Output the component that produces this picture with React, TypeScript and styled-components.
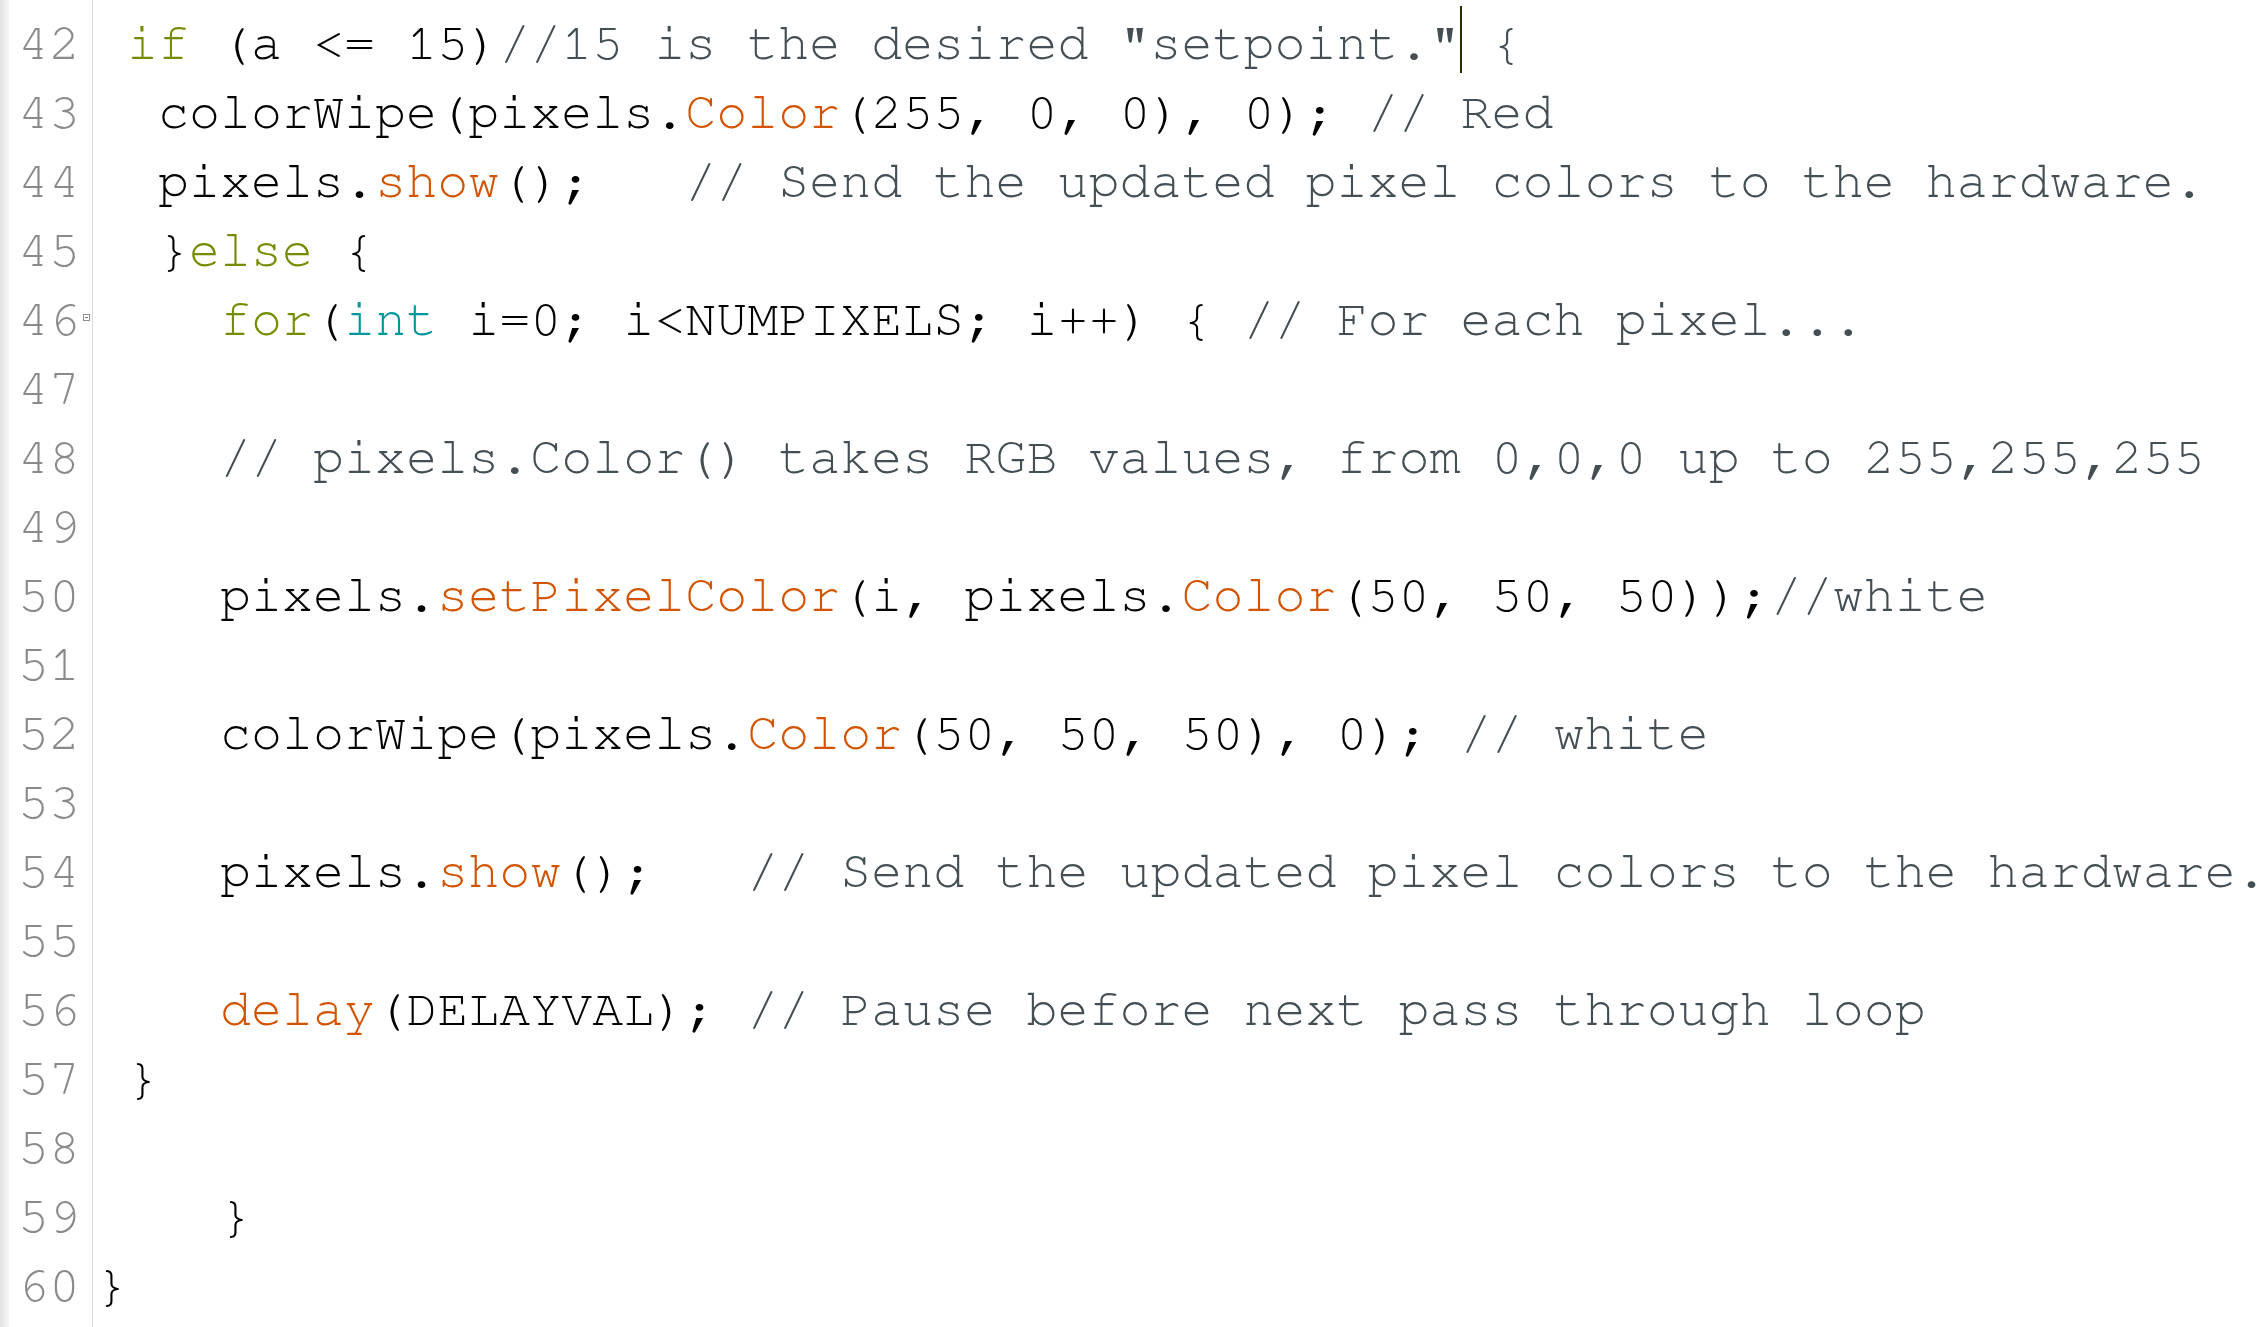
import React from "react";
import styled, { createGlobalStyle } from "styled-components";

const GlobalStyle = createGlobalStyle`
  html, body { margin: 0; padding: 0; background: #ffffff; }
  #root { height: 100vh; }
`;

const FONT = `"Nimbus Mono PS", "Nimbus Mono L", "FreeMono", "Liberation Mono", "Courier New", monospace`;
const SIZE = 51.7;
const LINE = 69;

type Kind = "p" | "k" | "t" | "f" | "c" | "caret";
type Tok = [string, Kind];

const colors: Record<Kind, string> = {
  p: "#000000",
  k: "#728e00",
  t: "#00979c",
  f: "#d35400",
  c: "#434f54",
  caret: "#000",
};

const lines: { n: number; fold?: boolean; toks: Tok[] }[] = [
  {
    n: 42,
    toks: [
      [" ", "p"],
      ["if", "k"],
      [" (a <= 15)", "p"],
      ['//15 is the desired "setpoint."', "c"],
      ["", "caret"],
      [" {", "c"],
    ],
  },
  {
    n: 43,
    toks: [
      ["  colorWipe(pixels.", "p"],
      ["Color", "f"],
      ["(255, 0, 0), 0); ", "p"],
      ["// Red", "c"],
    ],
  },
  {
    n: 44,
    toks: [
      ["  pixels.", "p"],
      ["show", "f"],
      ["();   ", "p"],
      ["// Send the updated pixel colors to the hardware.", "c"],
    ],
  },
  { n: 45, toks: [["  }", "p"], ["else", "k"], [" {", "p"]] },
  {
    n: 46,
    fold: true,
    toks: [
      ["    ", "p"],
      ["for", "k"],
      ["(", "p"],
      ["int", "t"],
      [" i=0; i<NUMPIXELS; i++) { ", "p"],
      ["// For each pixel...", "c"],
    ],
  },
  { n: 47, toks: [] },
  {
    n: 48,
    toks: [
      ["    ", "p"],
      ["// pixels.Color() takes RGB values, from 0,0,0 up to 255,255,255", "c"],
    ],
  },
  { n: 49, toks: [] },
  {
    n: 50,
    toks: [
      ["    pixels.", "p"],
      ["setPixelColor", "f"],
      ["(i, pixels.", "p"],
      ["Color", "f"],
      ["(50, 50, 50));", "p"],
      ["//white", "c"],
    ],
  },
  { n: 51, toks: [] },
  {
    n: 52,
    toks: [
      ["    colorWipe(pixels.", "p"],
      ["Color", "f"],
      ["(50, 50, 50), 0); ", "p"],
      ["// white", "c"],
    ],
  },
  { n: 53, toks: [] },
  {
    n: 54,
    toks: [
      ["    pixels.", "p"],
      ["show", "f"],
      ["();   ", "p"],
      ["// Send the updated pixel colors to the hardware.", "c"],
    ],
  },
  { n: 55, toks: [] },
  {
    n: 56,
    toks: [
      ["    ", "p"],
      ["delay", "f"],
      ["(DELAYVAL); ", "p"],
      ["// Pause before next pass through loop", "c"],
    ],
  },
  { n: 57, toks: [[" }", "p"]] },
  { n: 58, toks: [] },
  { n: 59, toks: [["    }", "p"]] },
  { n: 60, toks: [["}", "p"]] },
];

const Editor = styled.div`
  display: flex;
  height: 100vh;
  background: #ffffff;
  overflow: hidden;
`;

const EdgeBar = styled.div`
  width: 9px;
  flex: 0 0 9px;
  background: linear-gradient(to right, #e2e2e2, #eeeeee 60%, #f6f6f6);
`;

const Gutter = styled.div`
  width: 84px;
  flex: 0 0 84px;
  border-right: 1px solid #dddddd;
  padding-top: 9px;
  box-sizing: border-box;
`;

const LineNo = styled.div`
  position: relative;
  height: ${LINE}px;
  line-height: ${LINE}px;
  font-family: ${FONT};
  font-size: ${SIZE}px;
  color: #8a8a8a;
  text-align: right;
  padding-right: 12px;
  white-space: pre;
`;

const FoldMark = styled.span`
  position: absolute;
  right: 2px;
  top: 29px;
  width: 7px;
  height: 7px;
  border: 1px solid #8f8f8f;
  box-sizing: border-box;
  background: #fff;
  &::after {
    content: "";
    position: absolute;
    left: 1px;
    right: 1px;
    top: 2px;
    height: 1px;
    background: #777;
  }
`;

const Code = styled.div`
  flex: 1;
  padding-top: 9px;
  padding-left: 3px;
`;

const CodeLine = styled.div`
  height: ${LINE}px;
  line-height: ${LINE}px;
  font-family: ${FONT};
  font-size: ${SIZE}px;
  white-space: pre;
`;

const Tk = styled.span<{ $c: string }>`
  color: ${(p) => p.$c};
`;

const Caret = styled.span`
  display: inline-block;
  width: 0;
  height: 67px;
  border-left: 2px solid #2b2b00;
  vertical-align: top;
  margin-top: -3px;
  margin-left: -1px;
  margin-right: -1px;
`;

export default function App() {
  return (
    <>
      <GlobalStyle />
      <Editor>
        <EdgeBar />
        <Gutter>
          {lines.map((l) => (
            <LineNo key={l.n}>
              {l.n}
              {l.fold && <FoldMark />}
            </LineNo>
          ))}
        </Gutter>
        <Code>
          {lines.map((l) => (
            <CodeLine key={l.n}>
              {l.toks.map((t, i) =>
                t[1] === "caret" ? (
                  <Caret key={i} />
                ) : (
                  <Tk key={i} $c={colors[t[1]]}>
                    {t[0]}
                  </Tk>
                )
              )}
            </CodeLine>
          ))}
        </Code>
      </Editor>
    </>
  );
}
